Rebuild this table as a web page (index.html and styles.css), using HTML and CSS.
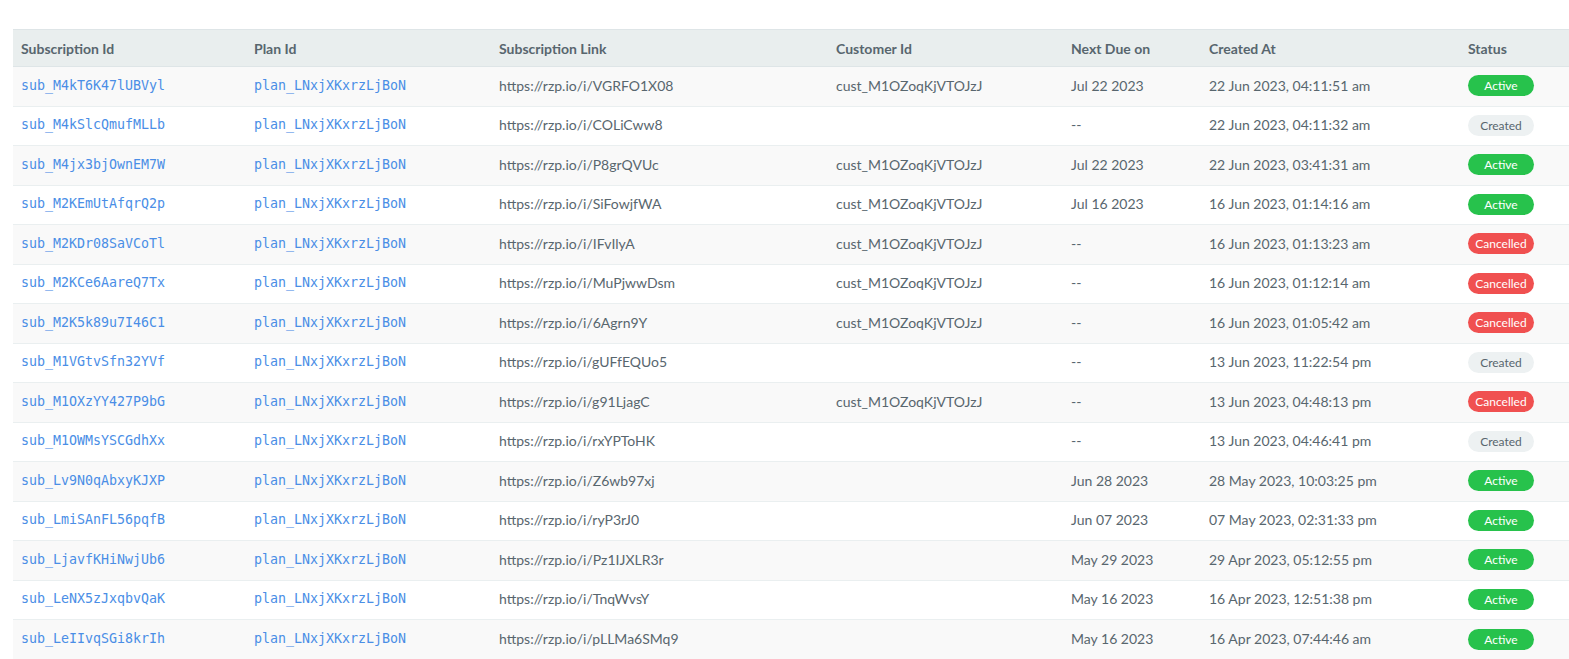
FILE: index.html
```html
<!DOCTYPE html>
<html>
<head>
<meta charset="utf-8">
<link rel="stylesheet" href="styles.css">
</head>
<body>
<div class="wrap">
<table class="subs">
<colgroup>
<col class="c1"><col class="c2"><col class="c3"><col class="c4"><col class="c5"><col class="c6"><col class="c7">
</colgroup>
<thead>
<tr><th>Subscription Id</th><th>Plan Id</th><th>Subscription Link</th><th>Customer Id</th><th>Next Due on</th><th>Created At</th><th>Status</th></tr>
</thead>
<tbody>
<tr><td class="mono">sub_M4kT6K47lUBVyl</td><td class="mono">plan_LNxjXKxrzLjBoN</td><td>https://rzp.io/i/VGRFO1X08</td><td>cust_M1OZoqKjVTOJzJ</td><td>Jul 22 2023</td><td>22 Jun 2023, 04:11:51 am</td><td><span class="badge active">Active</span></td></tr>
<tr><td class="mono">sub_M4kSlcQmufMLLb</td><td class="mono">plan_LNxjXKxrzLjBoN</td><td>https://rzp.io/i/COLiCww8</td><td></td><td>--</td><td>22 Jun 2023, 04:11:32 am</td><td><span class="badge created">Created</span></td></tr>
<tr><td class="mono">sub_M4jx3bjOwnEM7W</td><td class="mono">plan_LNxjXKxrzLjBoN</td><td>https://rzp.io/i/P8grQVUc</td><td>cust_M1OZoqKjVTOJzJ</td><td>Jul 22 2023</td><td>22 Jun 2023, 03:41:31 am</td><td><span class="badge active">Active</span></td></tr>
<tr><td class="mono">sub_M2KEmUtAfqrQ2p</td><td class="mono">plan_LNxjXKxrzLjBoN</td><td>https://rzp.io/i/SiFowjfWA</td><td>cust_M1OZoqKjVTOJzJ</td><td>Jul 16 2023</td><td>16 Jun 2023, 01:14:16 am</td><td><span class="badge active">Active</span></td></tr>
<tr><td class="mono">sub_M2KDr08SaVCoTl</td><td class="mono">plan_LNxjXKxrzLjBoN</td><td>https://rzp.io/i/IFvIlyA</td><td>cust_M1OZoqKjVTOJzJ</td><td>--</td><td>16 Jun 2023, 01:13:23 am</td><td><span class="badge cancelled">Cancelled</span></td></tr>
<tr><td class="mono">sub_M2KCe6AareQ7Tx</td><td class="mono">plan_LNxjXKxrzLjBoN</td><td>https://rzp.io/i/MuPjwwDsm</td><td>cust_M1OZoqKjVTOJzJ</td><td>--</td><td>16 Jun 2023, 01:12:14 am</td><td><span class="badge cancelled">Cancelled</span></td></tr>
<tr><td class="mono">sub_M2K5k89u7I46C1</td><td class="mono">plan_LNxjXKxrzLjBoN</td><td>https://rzp.io/i/6Agrn9Y</td><td>cust_M1OZoqKjVTOJzJ</td><td>--</td><td>16 Jun 2023, 01:05:42 am</td><td><span class="badge cancelled">Cancelled</span></td></tr>
<tr><td class="mono">sub_M1VGtvSfn32YVf</td><td class="mono">plan_LNxjXKxrzLjBoN</td><td>https://rzp.io/i/gUFfEQUo5</td><td></td><td>--</td><td>13 Jun 2023, 11:22:54 pm</td><td><span class="badge created">Created</span></td></tr>
<tr><td class="mono">sub_M1OXzYY427P9bG</td><td class="mono">plan_LNxjXKxrzLjBoN</td><td>https://rzp.io/i/g91LjagC</td><td>cust_M1OZoqKjVTOJzJ</td><td>--</td><td>13 Jun 2023, 04:48:13 pm</td><td><span class="badge cancelled">Cancelled</span></td></tr>
<tr><td class="mono">sub_M1OWMsYSCGdhXx</td><td class="mono">plan_LNxjXKxrzLjBoN</td><td>https://rzp.io/i/rxYPToHK</td><td></td><td>--</td><td>13 Jun 2023, 04:46:41 pm</td><td><span class="badge created">Created</span></td></tr>
<tr><td class="mono">sub_Lv9N0qAbxyKJXP</td><td class="mono">plan_LNxjXKxrzLjBoN</td><td>https://rzp.io/i/Z6wb97xj</td><td></td><td>Jun 28 2023</td><td>28 May 2023, 10:03:25 pm</td><td><span class="badge active">Active</span></td></tr>
<tr><td class="mono">sub_LmiSAnFL56pqfB</td><td class="mono">plan_LNxjXKxrzLjBoN</td><td>https://rzp.io/i/ryP3rJ0</td><td></td><td>Jun 07 2023</td><td>07 May 2023, 02:31:33 pm</td><td><span class="badge active">Active</span></td></tr>
<tr><td class="mono">sub_LjavfKHiNwjUb6</td><td class="mono">plan_LNxjXKxrzLjBoN</td><td>https://rzp.io/i/Pz1IJXLR3r</td><td></td><td>May 29 2023</td><td>29 Apr 2023, 05:12:55 pm</td><td><span class="badge active">Active</span></td></tr>
<tr><td class="mono">sub_LeNX5zJxqbvQaK</td><td class="mono">plan_LNxjXKxrzLjBoN</td><td>https://rzp.io/i/TnqWvsY</td><td></td><td>May 16 2023</td><td>16 Apr 2023, 12:51:38 pm</td><td><span class="badge active">Active</span></td></tr>
<tr><td class="mono">sub_LeIIvqSGi8krIh</td><td class="mono">plan_LNxjXKxrzLjBoN</td><td>https://rzp.io/i/pLLMa6SMq9</td><td></td><td>May 16 2023</td><td>16 Apr 2023, 07:44:46 am</td><td><span class="badge active">Active</span></td></tr>
</tbody>
</table>
</div>
</body>
</html>
```

FILE: styles.css
```css
html, body {
  margin: 0;
  padding: 0;
  background: #fff;
  overflow: hidden;
}
.wrap {
  padding: 29px 0 0 13px;
  width: 1600px;
}
.subs {
  border-collapse: collapse;
  table-layout: fixed;
  width: 1590px;
  font-family: Lato, "Open Sans", sans-serif;
  font-size: 14px;
  color: #58666e;
}
.c1 { width: 233px; }
.c2 { width: 245px; }
.c3 { width: 337px; }
.c4 { width: 235px; }
.c5 { width: 138px; }
.c6 { width: 259px; }
.c7 { width: 143px; }
.subs thead tr {
  background: #e9eeee;
  border-top: 1px solid #dee5e7;
  border-bottom: 1px solid #dee5e7;
}
.subs th {
  text-align: left;
  font-weight: 700;
  height: 36px;
  padding: 0 8px;
  vertical-align: middle;
}
.subs tbody tr {
  height: 39.5px;
  border-top: 1px solid #eaeff0;
}
.subs tbody tr:first-child { border-top: none; }
.subs tbody tr:nth-child(odd) { background: #f9f9f9; }
.subs td {
  padding: 0 8px 2px;
  vertical-align: middle;
  white-space: nowrap;
}
.mono {
  font-family: "DejaVu Sans Mono", monospace;
  font-size: 13.3px;
  color: #4a8ee6;
}
.badge {
  display: inline-block;
  vertical-align: middle;
  width: 66px;
  height: 21px;
  line-height: 21px;
  margin-top: 1px;
  border-radius: 11px;
  text-align: center;
  font-size: 12px;
  font-weight: 400;
}
.active { background: #27c24c; color: #fff; }
.cancelled { background: #f05050; color: #fff; }
.created { background: #edf1f2; color: #58666e; }
```
